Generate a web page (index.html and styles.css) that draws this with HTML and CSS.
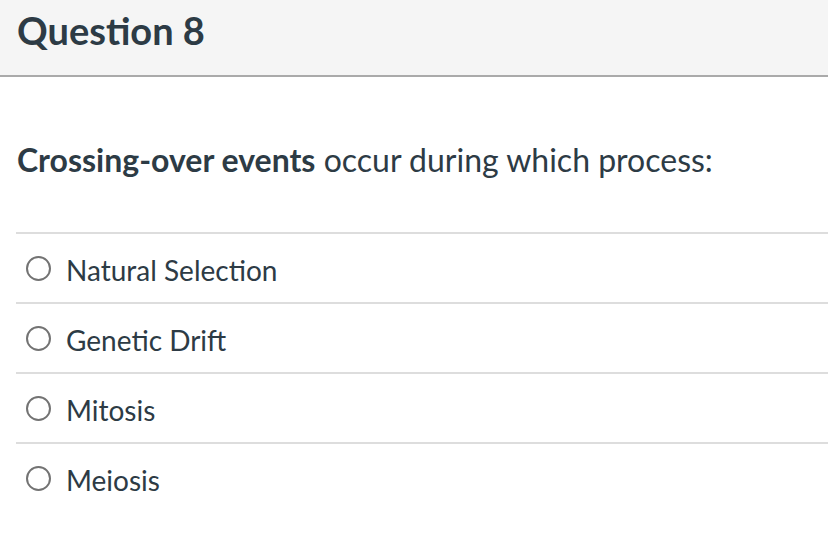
FILE: index.html
```html
<!DOCTYPE html>
<html>
<head>
<meta charset="utf-8">
<link rel="stylesheet" href="styles.css">
</head>
<body>
<div class="header"><h2 class="title">Question 8</h2></div>
<div class="question">
  <p class="text"><strong>Crossing-over events</strong> occur during which process:</p>
</div>
<div class="answers">
  <div class="answer"><span class="radio"></span><span class="label">Natural Selection</span></div>
  <div class="answer"><span class="radio"></span><span class="label">Genetic Drift</span></div>
  <div class="answer"><span class="radio"></span><span class="label">Mitosis</span></div>
  <div class="answer"><span class="radio"></span><span class="label">Meiosis</span></div>
</div>
</body>
</html>
```
FILE: styles.css
```css
html, body {
  margin: 0;
  padding: 0;
  background: #fff;
}
body {
  font-family: Lato, "Open Sans", sans-serif;
  color: #2d3b45;
  width: 828px;
  height: 536px;
  overflow: hidden;
}
.header {
  background: #f5f5f5;
  height: 75px;
  border-bottom: 2px solid #aaaaaa;
  display: flex;
  align-items: center;
  padding-left: 17px;
}
.title {
  margin: 0;
  font-size: 38px;
  font-weight: 700;
  line-height: 1;
  margin-top: -15px;
}
.question {
  height: 155px;
  display: flex;
  align-items: center;
  padding-left: 17px;
}
.text {
  margin: 0;
  font-size: 32px;
  line-height: 1;
  margin-top: 10px;
}
.text strong {
  font-weight: 700;
}
.answers {
  margin-left: 16px;
}
.answer {
  border-top: 2px solid #dddddd;
  height: 68px;
  display: flex;
  align-items: center;
  padding-left: 10px;
}
.radio {
  width: 21px;
  height: 21px;
  border: 2px solid #737373;
  border-radius: 50%;
  flex: none;
}
.label {
  font-size: 28px;
  margin-left: 15px;
  line-height: 1;
  margin-top: 4px;
}
```
